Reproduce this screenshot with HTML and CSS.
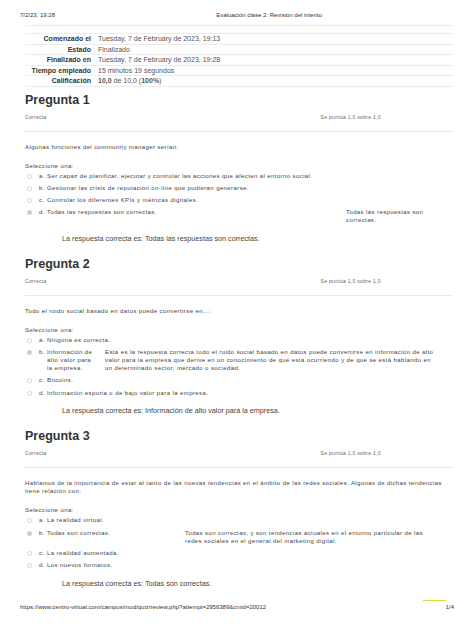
FILE: index.html
```html
<!DOCTYPE html>
<html lang="es">
<head>
  <meta charset="UTF-8">
  <meta name="viewport" content="width=device-width, initial-scale=1.0">
  <title>Evaluación clase 2: Revisión del intento</title>
  <link rel="stylesheet" href="styles.css">
</head>
<body>
  <div class="print-head">
    <span>7/2/23, 19:28</span>
    <span class="doc-title">Evaluación clase 2: Revisión del intento</span>
  </div>

  <div class="page">
    <table class="summary">
      <tr class="spacer"><th></th><td></td></tr>
      <tr><th>Comenzado el</th><td>Tuesday, 7 de February de 2023, 19:13</td></tr>
      <tr><th>Estado</th><td>Finalizado</td></tr>
      <tr><th>Finalizado en</th><td>Tuesday, 7 de February de 2023, 19:28</td></tr>
      <tr><th>Tiempo empleado</th><td>15 minutos 19 segundos</td></tr>
      <tr><th>Calificación</th><td><b>10,0</b> de 10,0 (<b>100%</b>)</td></tr>
    </table>

    <div class="que">
      <h2>Pregunta 1</h2>
      <div class="state"><span>Correcta</span><span class="grade">Se puntúa 1,0 sobre 1,0</span></div>
      <div class="qtext">Algunas funciones del community manager serían:</div>
      <div class="prompt">Seleccione una:</div>
      <div class="answer">
        <div class="opt"><span class="radio"></span><span class="letter">a.</span><span class="label">Ser capaz de planificar, ejecutar y controlar las acciones que afecten al entorno social.</span></div>
        <div class="opt"><span class="radio"></span><span class="letter">b.</span><span class="label">Gestionar las crisis de reputación on-line que pudieran generarse.</span></div>
        <div class="opt"><span class="radio"></span><span class="letter">c.</span><span class="label">Controlar los diferentes KPIs y métricas digitales.</span></div>
        <div class="opt"><span class="radio checked"></span><span class="letter">d.</span><span class="label label-wide">Todas las respuestas son correctas.</span><span class="feedback feedback-narrow">Todas las respuestas son correctas.</span></div>
      </div>
      <div class="rightanswer">La respuesta correcta es: Todas las respuestas son correctas.</div>
    </div>

    <div class="que">
      <h2>Pregunta 2</h2>
      <div class="state"><span>Correcta</span><span class="grade">Se puntúa 1,0 sobre 1,0</span></div>
      <div class="qtext">Todo el ruido social basado en datos puede convertirse en...:</div>
      <div class="prompt">Seleccione una:</div>
      <div class="answer">
        <div class="opt"><span class="radio"></span><span class="letter">a.</span><span class="label">Ninguna es correcta.</span></div>
        <div class="opt"><span class="radio checked"></span><span class="letter">b.</span><span class="label label-narrow">Información de alto valor para la empresa.</span><span class="feedback">Esta es la respuesta correcta todo el ruido social basado en datos puede convertirse en información de alto valor para la empresa que derive en un conocimiento de qué está ocurriendo y de qué se está hablando en un determinado sector, mercado o sociedad.</span></div>
        <div class="opt"><span class="radio"></span><span class="letter">c.</span><span class="label">Bitcoins.</span></div>
        <div class="opt"><span class="radio"></span><span class="letter">d.</span><span class="label">Información espuria o de bajo valor para la empresa.</span></div>
      </div>
      <div class="rightanswer">La respuesta correcta es: Información de alto valor para la empresa.</div>
    </div>

    <div class="que">
      <h2>Pregunta 3</h2>
      <div class="state"><span>Correcta</span><span class="grade">Se puntúa 1,0 sobre 1,0</span></div>
      <div class="qtext">Hablamos de la importancia de estar al tanto de las nuevas tendencias en el ámbito de las redes sociales. Algunas de dichas tendencias tiene relación con:</div>
      <div class="prompt">Seleccione una:</div>
      <div class="answer">
        <div class="opt"><span class="radio"></span><span class="letter">a.</span><span class="label">La realidad virtual.</span></div>
        <div class="opt"><span class="radio checked"></span><span class="letter">b.</span><span class="label label-mid">Todas son correctas.</span><span class="feedback">Todas son correctas, y son tendencias actuales en el entorno particular de las redes sociales en el general del marketing digital.</span></div>
        <div class="opt"><span class="radio"></span><span class="letter">c.</span><span class="label">La realidad aumentada.</span></div>
        <div class="opt"><span class="radio"></span><span class="letter">d.</span><span class="label">Los nuevos formatos.</span></div>
      </div>
      <div class="rightanswer">La respuesta correcta es: Todas son correctas.</div>
    </div>

    <div class="mark-row"><span class="mark"></span></div>
  </div>

  <div class="print-foot">
    <span>https://www.centro-virtual.com/campus/mod/quiz/review.php?attempt=2956389&amp;cmid=20012</span>
    <span>1/4</span>
  </div>
</body>
</html>
```

FILE: styles.css
```css
/* print-to-pdf look of the quiz review page */
body {
  font-family: "Liberation Sans", Arial, sans-serif;
  color: #444;
  background-color: #fff;
  margin: 0;
  padding: 0;
}

.print-head {
  display: flex;
  padding: 11px 0 0 20px;
  font-size: 6px;
  line-height: 8px;
  color: #333;
}
.doc-title {
  margin-left: auto;
  margin-right: 152px;
}

.page {
  padding: 0 21px 0 25px;
}

/* attempt summary */
.summary {
  width: 100%;
  border-collapse: collapse;
  margin-top: 6px;
  font-size: 7px;
}
.summary th,
.summary td {
  height: 9.5px;
  padding: 0;
  line-height: 9.5px;
  border-bottom: 1px solid #ececec;
  vertical-align: middle;
}
.summary .spacer th,
.summary .spacer td {
  height: 7px;
  border-top: 1px solid #ececec;
}
.summary th {
  width: 66px;
  padding-right: 7px;
  text-align: right;
  font-weight: bold;
  color: #333;
  white-space: nowrap;
}
.summary td {
  color: #555;
}

/* question blocks */
.que {
  margin-top: 6px;
}
.que + .que {
  margin-top: 13px;
}
.que h2 {
  margin: 0;
  font-size: 12.5px;
  line-height: 14px;
  color: #333;
}
.state {
  display: flex;
  margin-top: 6px;
  padding-bottom: 10px;
  border-bottom: 1px solid #e8e8e8;
  font-size: 5px;
  line-height: 8px;
  letter-spacing: 0.3px;
  color: #666;
}
.grade {
  margin-left: 274px;
}
.qtext,
.prompt,
.opt {
  font-size: 6px;
  line-height: 8px;
  letter-spacing: 0.4px;
}
.qtext {
  margin-top: 11px;
  padding-right: 6px;
}
.prompt {
  margin-top: 11px;
}
.answer {
  margin-top: 2px;
}
.opt {
  display: flex;
  align-items: flex-start;
  margin-bottom: 4.3px;
}
.radio {
  flex: none;
  box-sizing: border-box;
  width: 5px;
  height: 5px;
  margin: 2px 7px 0 2px;
  border: 0.6px solid #d5d5d5;
  border-radius: 50%;
}
.radio.checked {
  background-color: #ccc;
  border-color: #ccc;
}
.letter {
  flex: none;
  width: 8px;
}
.label {
  flex: none;
}
.label-wide {
  width: 291px;
}
.label-narrow {
  width: 50px;
}
.label-mid {
  width: 130px;
}
.feedback {
  flex: 1;
  margin-left: 8px;
  padding-right: 14px;
}
.feedback-narrow {
  flex: none;
  width: 80px;
  padding-right: 0;
}
.rightanswer {
  margin-top: 9.5px;
  padding-left: 37px;
  font-size: 7.2px;
  line-height: 10px;
  color: #444;
}

.mark-row {
  display: flex;
  justify-content: flex-end;
  padding-right: 7px;
  margin-top: 6px;
}
.mark {
  width: 23px;
  height: 5px;
  background: linear-gradient(#fff, #fbfde8);
  border-bottom: 1.5px solid #d8de38;
}

.print-foot {
  display: flex;
  justify-content: space-between;
  padding: 2px 20px 0 20px;
  font-size: 6px;
  line-height: 8px;
  color: #333;
}
```
